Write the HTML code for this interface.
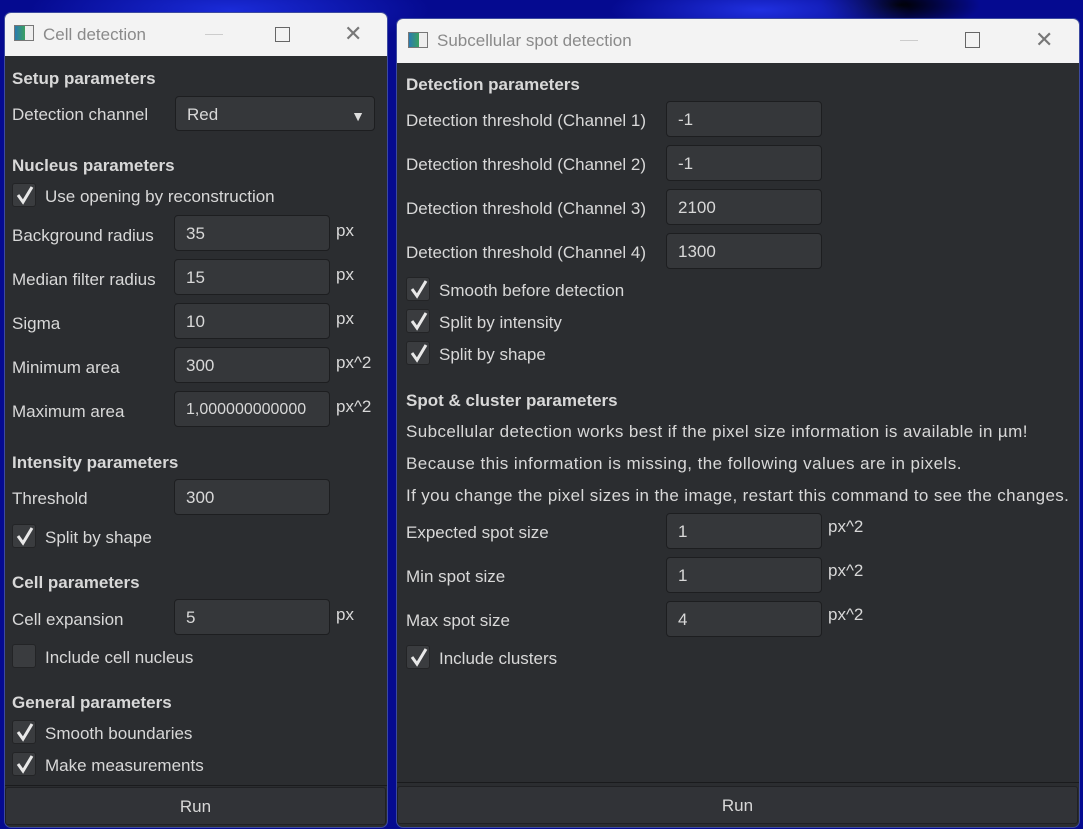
<!DOCTYPE html>
<html><head><meta charset="utf-8"><style>
*{margin:0;padding:0;box-sizing:border-box}
body{width:1083px;height:829px;overflow:hidden;position:relative;font-family:"Liberation Sans",sans-serif;font-size:17px;color:#d8d8d8;
background:radial-gradient(ellipse 200px 40px at 230px 10px,#1a2bd8,transparent),radial-gradient(ellipse 150px 30px at 760px 10px,#2030e0,transparent),radial-gradient(ellipse 80px 25px at 900px 5px,#000,transparent),#050a90}
.win{position:absolute;background:#2b2d30;border:1px solid #3c4aa0;border-radius:7px;overflow:hidden}
.tb{position:absolute;left:0;right:0;top:0;background:#f3f3f3;color:#8a8a8a;font-size:17px}
.tb .t{position:absolute;top:0;line-height:100%}
.ico{position:absolute;width:20px;height:16px;border:1px solid #777;background:linear-gradient(90deg,#2a7ab0 0,#3aa060 55%,#eee 55%)}
.ctrl{position:absolute;color:#777}
.a{position:absolute;white-space:nowrap;line-height:20px;margin-top:2px}
.b{font-weight:bold}
.in{position:absolute;height:36px;background:#35373a;border:1px solid #1d1e20;border-radius:4px;padding-left:11px;line-height:36px;color:#d8d8d8}
.cb{position:absolute;width:24px;height:24px;background:#3a3c3f;border:1px solid #232426;border-radius:3px}
.cb svg{position:absolute;left:3px;top:1px}
.run{position:absolute;background:#313337;border:1px solid #202124;border-radius:3px;text-align:center;line-height:38px}
</style></head><body>

<!-- LEFT -->
<div class="win" style="left:4px;top:12px;width:384px;height:816px">
 <div class="tb" style="height:43px">
  <div class="ico" style="left:9px;top:12px"></div>
  <div class="t" style="left:38px;line-height:43px">Cell detection</div>
  <div class="ctrl" style="left:200px;top:21px;width:18px;height:1px;background:#ccc"></div>
  <div class="ctrl" style="left:270px;top:14px;width:15px;height:15px;border:1px solid #666"></div>
  <div class="ctrl" style="left:339px;top:8px;font-size:22px">✕</div>
 </div>
 <div style="position:absolute;left:0;top:43px;right:0;height:730px;background:#2b2d30;border-bottom:1px solid #1a1b1d"></div>
</div>
<div class="a b" style="left:12px;top:67px">Setup parameters</div>
<div class="a" style="left:12px;top:103px">Detection channel</div>
<div class="in" style="left:175px;top:96px;width:200px;height:35px">Red<span style="position:absolute;right:9px;top:1px;font-size:14px;color:#ddd">▼</span></div>
<div class="a b" style="left:12px;top:154px">Nucleus parameters</div>
<div class="cb" style="left:12px;top:183px"><svg width="18" height="20"><path d="M2 10 L7 17 L16 2" stroke="#e8e8e8" stroke-width="3" fill="none"/></svg></div>
<div class="a" style="left:45px;top:185px">Use opening by reconstruction</div>
<div class="a" style="left:12px;top:224px">Background radius</div><div class="in" style="left:174px;top:215px;width:156px">35</div><div class="a" style="left:336px;top:219px">px</div>
<div class="a" style="left:12px;top:268px">Median filter radius</div><div class="in" style="left:174px;top:259px;width:156px">15</div><div class="a" style="left:336px;top:263px">px</div>
<div class="a" style="left:12px;top:312px">Sigma</div><div class="in" style="left:174px;top:303px;width:156px">10</div><div class="a" style="left:336px;top:307px">px</div>
<div class="a" style="left:12px;top:356px">Minimum area</div><div class="in" style="left:174px;top:347px;width:156px">300</div><div class="a" style="left:336px;top:351px">px^2</div>
<div class="a" style="left:12px;top:400px">Maximum area</div><div class="in" style="left:174px;top:391px;width:156px;padding-left:11px;font-size:16px">1,000000000000</div><div class="a" style="left:336px;top:395px">px^2</div>
<div class="a b" style="left:12px;top:451px">Intensity parameters</div>
<div class="a" style="left:12px;top:487px">Threshold</div><div class="in" style="left:174px;top:479px;width:156px">300</div>
<div class="cb" style="left:12px;top:524px"><svg width="18" height="20"><path d="M2 10 L7 17 L16 2" stroke="#e8e8e8" stroke-width="3" fill="none"/></svg></div>
<div class="a" style="left:45px;top:526px">Split by shape</div>
<div class="a b" style="left:12px;top:571px">Cell parameters</div>
<div class="a" style="left:12px;top:608px">Cell expansion</div><div class="in" style="left:174px;top:599px;width:156px">5</div><div class="a" style="left:336px;top:603px">px</div>
<div class="cb" style="left:12px;top:644px"></div>
<div class="a" style="left:45px;top:646px">Include cell nucleus</div>
<div class="a b" style="left:12px;top:691px">General parameters</div>
<div class="cb" style="left:12px;top:720px"><svg width="18" height="20"><path d="M2 10 L7 17 L16 2" stroke="#e8e8e8" stroke-width="3" fill="none"/></svg></div>
<div class="a" style="left:45px;top:722px">Smooth boundaries</div>
<div class="cb" style="left:12px;top:752px"><svg width="18" height="20"><path d="M2 10 L7 17 L16 2" stroke="#e8e8e8" stroke-width="3" fill="none"/></svg></div>
<div class="a" style="left:45px;top:754px">Make measurements</div>
<div class="run" style="left:5px;top:787px;width:381px;height:38px">Run</div>

<!-- RIGHT -->
<div class="win" style="left:396px;top:18px;width:684px;height:810px">
 <div class="tb" style="height:44px">
  <div class="ico" style="left:11px;top:13px"></div>
  <div class="t" style="left:40px;line-height:44px">Subcellular spot detection</div>
  <div class="ctrl" style="left:503px;top:21px;width:18px;height:1px;background:#ccc"></div>
  <div class="ctrl" style="left:568px;top:13px;width:15px;height:16px;border:1px solid #666"></div>
  <div class="ctrl" style="left:638px;top:8px;font-size:22px">✕</div>
 </div>
 <div style="position:absolute;left:0;top:44px;right:0;height:720px;background:#2b2d30;border-bottom:1px solid #1a1b1d"></div>
</div>
<div class="a b" style="left:406px;top:73px">Detection parameters</div>
<div class="a" style="left:406px;top:109px">Detection threshold (Channel 1)</div><div class="in" style="left:666px;top:101px;width:156px">-1</div>
<div class="a" style="left:406px;top:153px">Detection threshold (Channel 2)</div><div class="in" style="left:666px;top:145px;width:156px">-1</div>
<div class="a" style="left:406px;top:197px">Detection threshold (Channel 3)</div><div class="in" style="left:666px;top:189px;width:156px">2100</div>
<div class="a" style="left:406px;top:241px">Detection threshold (Channel 4)</div><div class="in" style="left:666px;top:233px;width:156px">1300</div>
<div class="cb" style="left:406px;top:277px"><svg width="18" height="20"><path d="M2 10 L7 17 L16 2" stroke="#e8e8e8" stroke-width="3" fill="none"/></svg></div>
<div class="a" style="left:439px;top:279px">Smooth before detection</div>
<div class="cb" style="left:406px;top:309px"><svg width="18" height="20"><path d="M2 10 L7 17 L16 2" stroke="#e8e8e8" stroke-width="3" fill="none"/></svg></div>
<div class="a" style="left:439px;top:311px">Split by intensity</div>
<div class="cb" style="left:406px;top:341px"><svg width="18" height="20"><path d="M2 10 L7 17 L16 2" stroke="#e8e8e8" stroke-width="3" fill="none"/></svg></div>
<div class="a" style="left:439px;top:343px">Split by shape</div>
<div class="a b" style="left:406px;top:389px">Spot &amp; cluster parameters</div>
<div class="a" style="left:406px;top:420px;letter-spacing:0.4px">Subcellular detection works best if the pixel size information is available in µm!</div>
<div class="a" style="left:406px;top:452px;letter-spacing:0.45px">Because this information is missing, the following values are in pixels.</div>
<div class="a" style="left:406px;top:484px;letter-spacing:0.37px">If you change the pixel sizes in the image, restart this command to see the changes.</div>
<div class="a" style="left:406px;top:521px">Expected spot size</div><div class="in" style="left:666px;top:513px;width:156px">1</div><div class="a" style="left:828px;top:515px">px^2</div>
<div class="a" style="left:406px;top:565px">Min spot size</div><div class="in" style="left:666px;top:557px;width:156px">1</div><div class="a" style="left:828px;top:559px">px^2</div>
<div class="a" style="left:406px;top:609px">Max spot size</div><div class="in" style="left:666px;top:601px;width:156px">4</div><div class="a" style="left:828px;top:603px">px^2</div>
<div class="cb" style="left:406px;top:645px"><svg width="18" height="20"><path d="M2 10 L7 17 L16 2" stroke="#e8e8e8" stroke-width="3" fill="none"/></svg></div>
<div class="a" style="left:439px;top:647px">Include clusters</div>
<div class="run" style="left:397px;top:786px;width:681px;height:38px">Run</div>
</body></html>
